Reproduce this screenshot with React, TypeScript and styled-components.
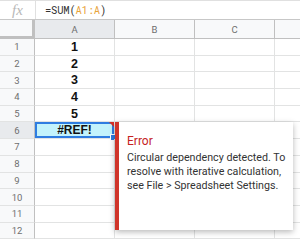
import styled, { createGlobalStyle } from 'styled-components';

const Global = createGlobalStyle`
  html, body { margin: 0; padding: 0; background: #fff; }
  body { font-family: Roboto, Arial, sans-serif; }
`;

const Page = styled.div`
  position: relative;
  width: 300px;
  height: 241px;
  overflow: hidden;
  background: #fff;
`;

const FormulaBar = styled.div`
  display: flex;
  align-items: center;
  height: 18px;
  border-top: 1px solid #e0e0e0;
  border-bottom: 1px solid #c7c7c7;
`;

const FxBox = styled.div`
  width: 35px;
  height: 100%;
  display: flex;
  align-items: center;
  justify-content: center;
  border-right: 1px solid #e0e0e0;
  font-family: 'Liberation Serif', serif;
  font-style: italic;
  font-size: 15px;
  color: #b8b8b8;
`;

const Formula = styled.div`
  padding-left: 9px;
  font-family: 'Roboto Mono', 'DejaVu Sans Mono', monospace;
  font-size: 10.5px;
  color: #333;
  letter-spacing: -0.2px;
`;

const Ref = styled.span`
  color: #e8a33b;
`;

const Grid = styled.div`
  display: grid;
  grid-template-columns: 35px 80px 80px 80px 80px;
  grid-template-rows: 19px repeat(12, 16.7px);
`;

const HeadCell = styled.div<{ $active?: boolean; $corner?: boolean }>`
  display: flex;
  align-items: center;
  justify-content: center;
  box-sizing: border-box;
  background: ${(p) => (p.$active ? '#e8eaed' : '#f8f9fa')};
  border-right: ${(p) => (p.$corner ? '3px solid #c0c0c0' : '1px solid #c0c0c0')};
  border-bottom: ${(p) => (p.$corner ? '3px solid #c0c0c0' : '1px solid #c0c0c0')};
  font-size: 9.5px;
  color: #6f6f6f;
`;

const RowHead = styled(HeadCell)`
  border-right: 1px solid #c0c0c0;
  border-bottom: 1px solid #e2e3e3;
`;

const Cell = styled.div<{ $selected?: boolean }>`
  position: relative;
  display: flex;
  align-items: center;
  justify-content: center;
  box-sizing: border-box;
  border-right: 1px solid #e2e3e3;
  border-bottom: 1px solid #e2e3e3;
  font-family: 'Liberation Sans', Arial, sans-serif;
  font-weight: 700;
  font-size: 12.5px;
  color: #111;
  ${(p) =>
    p.$selected &&
    `
    font-size: 12px;
    background: #c3f3fc;
    box-shadow: inset 0 0 0 2px #2f7de1;
  `}
`;

const ErrorMark = styled.span`
  position: absolute;
  right: 0;
  top: 0;
  width: 0;
  height: 0;
  border-top: 5px solid #d93025;
  border-left: 5px solid transparent;
`;

const Handle = styled.span`
  position: absolute;
  right: -3px;
  bottom: -3px;
  width: 5px;
  height: 5px;
  background: #2f7de1;
  border: 1px solid #fff;
`;

const Popup = styled.div`
  position: absolute;
  left: 115px;
  top: 122px;
  width: 178px;
  height: 108px;
  box-sizing: border-box;
  background: #fff;
  border-left: 4px solid #d0352a;
  box-shadow: 0 2px 6px rgba(0, 0, 0, 0.28);
  padding: 12px 2px 0 8px;
  font-family: Roboto, Arial, sans-serif;
`;

const PopupTitle = styled.div`
  color: #c5221f;
  font-size: 12px;
  line-height: 14px;
  margin-bottom: 3px;
`;

const PopupBody = styled.div`
  color: #333;
  font-size: 10.7px;
  line-height: 14px;
`;

const cols = ['A', 'B', 'C', ''];
const values: Record<number, string> = { 1: '1', 2: '2', 3: '3', 4: '4', 5: '5', 6: '#REF!' };

export default function App() {
  const rows = Array.from({ length: 12 }, (_, i) => i + 1);
  return (
    <Page>
      <Global />
      <FormulaBar>
        <FxBox>fx</FxBox>
        <Formula>
          =SUM(<Ref>A1:A</Ref>)
        </Formula>
      </FormulaBar>
      <Grid>
        <HeadCell $corner />
        {cols.map((c, i) => (
          <HeadCell key={i} $active={c === 'A'}>
            {c}
          </HeadCell>
        ))}
        {rows.map((r) => (
          <Row key={r} r={r} />
        ))}
      </Grid>
      <Popup>
        <PopupTitle>Error</PopupTitle>
        <PopupBody>
          Circular dependency detected. To resolve with iterative calculation, see File &gt;
          Spreadsheet Settings.
        </PopupBody>
      </Popup>
    </Page>
  );

  function Row({ r }: { r: number }) {
    const sel = r === 6;
    return (
      <>
        <RowHead $active={sel}>{r}</RowHead>
        <Cell $selected={sel}>
          {values[r]}
          {sel && <ErrorMark />}
          {sel && <Handle />}
        </Cell>
        <Cell />
        <Cell />
        <Cell />
      </>
    );
  }
}
